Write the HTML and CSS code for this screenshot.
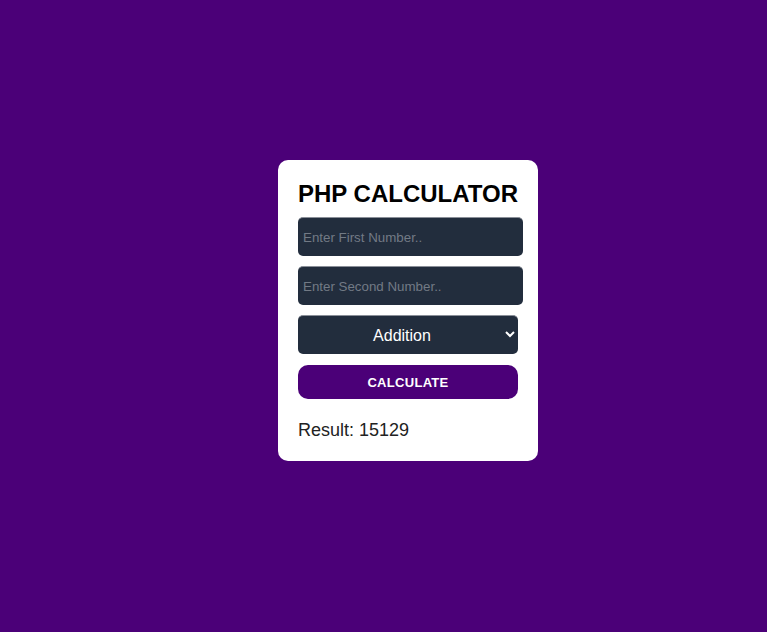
FILE: index.html
```
<!DOCTYPE html>
<html>
<head>
<meta charset="utf-8">
<link rel="stylesheet" href="styles.css">
</head>
<body>
<div class="page">
  <form class="card">
    <h1 class="title">PHP CALCULATOR</h1>
    <input class="field" type="text" placeholder="Enter First Number..">
    <input class="field" type="text" placeholder="Enter Second Number..">
    <select class="op">
      <option>Addition</option>
      <option>Subtraction</option>
      <option>Multiplication</option>
      <option>Division</option>
    </select>
    <button class="btn" type="button">CALCULATE</button>
    <p class="result">Result: 15129</p>
  </form>
</div>
</body>
</html>
```
FILE: styles.css
```
html, body {
  margin: 0;
  padding: 0;
  background: #4b0078;
  font-family: "Liberation Sans", Arial, sans-serif;
}
.page {
  height: 632px;
  box-sizing: border-box;
  padding: 160px 0 0 278px;
  display: flex;
  justify-content: flex-start;
  align-items: flex-start;
}
.card {
  width: 260px;
  box-sizing: border-box;
  background: #fff;
  border-radius: 10px;
  padding: 20px 20px 20px 20px;
  display: flex;
  flex-direction: column;
  align-items: flex-start;
}
.title {
  margin: 0 0 9px 0;
  font-size: 24px;
  font-weight: bold;
  color: #000;
  line-height: 28px;
}
.field {
  width: 225px;
  height: 39px;
  box-sizing: border-box;
  margin: 0 0 10px 0;
  padding: 0 5px;
  border: none;
  border-top: 1px solid #8a8f98;
  border-radius: 5px;
  background: #222d3d;
  color: #fff;
  font-family: "Liberation Sans", Arial, sans-serif;
  font-size: 13.33px;
}
.field::placeholder {
  color: #727a85;
}
.op {
  width: 220px;
  height: 39px;
  margin: 0 0 11px 0;
  border: none;
  border-top: 1px solid #8a8f98;
  border-radius: 5px;
  background: #222d3d;
  color: #fff;
  font-family: "Liberation Sans", Arial, sans-serif;
  font-size: 16px;
  text-align: center;
  text-align-last: center;
  padding: 0 4px;
}
.btn {
  width: 220px;
  height: 34px;
  border: none;
  border-radius: 10px;
  background: #4b0078;
  color: #fff;
  font-family: "Liberation Sans", Arial, sans-serif;
  font-size: 13px;
  font-weight: bold;
  letter-spacing: 0.3px;
  margin: 0 0 21px 0;
}
.result {
  margin: 0;
  font-size: 18px;
  line-height: 21px;
  color: #222;
}
```
